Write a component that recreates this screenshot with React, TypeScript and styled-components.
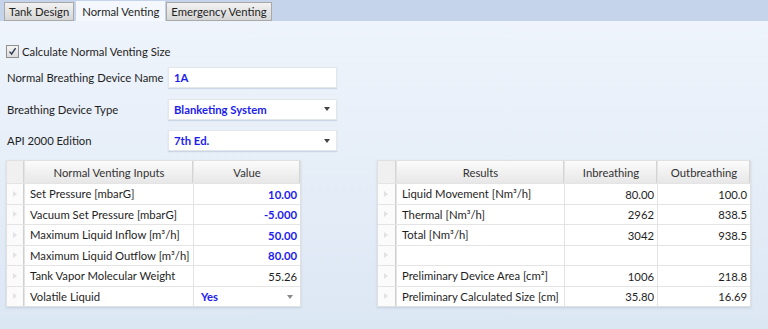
import React from 'react';
import styled, { createGlobalStyle } from 'styled-components';

const GlobalStyle = createGlobalStyle`
  html, body {
    margin: 0;
    padding: 0;
  }
  body {
    font-family: Lato, 'Liberation Sans', Arial, sans-serif;
    font-size: 11.3px;
    color: #1e1e1e;
  }
`;

const Window = styled.div`
  width: 768px;
  height: 329px;
  display: flex;
  flex-direction: column;
  overflow: hidden;
  background: linear-gradient(180deg, #f0f5fc 0%, #e6eef8 50%, #dce7f4 100%);
`;

const TabStrip = styled.div`
  display: flex;
  align-items: flex-end;
  height: 21px;
  padding-left: 4px;
  background: #c5d4ea;
  box-sizing: border-box;
`;

const Tab = styled.div<{ active?: boolean }>`
  height: ${p => (p.active ? '21px' : '19px')};
  padding: 0 ${p => (p.active ? '6px' : '4px')};
  margin-right: ${p => (p.active ? '0' : '1px')};
  display: flex;
  align-items: center;
  box-sizing: border-box;
  font-size: 11.3px;
  color: #1e1e1e;
  border: 1px solid ${p => (p.active ? '#c5d4ea' : '#a9a9a9')};
  border-bottom: ${p => (p.active ? 'none' : '1px solid #a9a9a9')};
  background: ${p =>
    p.active
      ? '#f4f8fd'
      : 'linear-gradient(180deg, #f2f2f2 0%, #e4e4e4 50%, #d6d6d6 100%)'};
`;

const Content = styled.div`
  flex: 1;
  padding: 23px 0 0 6px;
  display: flex;
  flex-direction: column;
`;

const CheckRow = styled.label`
  display: flex;
  align-items: center;
  gap: 3px;
  height: 14px;
`;

const CheckBox = styled.span`
  width: 11px;
  height: 11px;
  border: 1px solid #8e8f8f;
  background: linear-gradient(180deg, #f4f4f4, #dcdcdc);
  display: flex;
  align-items: center;
  justify-content: center;
`;

const FormRows = styled.div`
  display: flex;
  flex-direction: column;
  gap: 10.5px;
  margin-top: 9px;
`;

const FormRow = styled.div`
  display: flex;
  align-items: center;
  height: 21px;
`;

const FormLabel = styled.span`
  width: 162px;
  padding-left: 1px;
  box-sizing: border-box;
  white-space: nowrap;
`;

const Field = styled.div`
  width: 169px;
  height: 21px;
  box-sizing: border-box;
  display: flex;
  align-items: center;
  justify-content: space-between;
  padding: 0 6px 0 5px;
  background: #fff;
  border: 1px solid #e3e6ea;
  box-shadow: 0 1px 1px rgba(120, 140, 170, 0.25);
  color: #1c1cee;
  font-weight: bold;
`;

const DropArrow = styled.span<{ faint?: boolean }>`
  width: 0;
  height: 0;
  border-left: 3.5px solid transparent;
  border-right: 3.5px solid transparent;
  border-top: 4px solid ${p => (p.faint ? '#8a8a8a' : '#444')};
`;

const Grids = styled.div`
  display: flex;
  align-items: flex-start;
  gap: 76px;
  margin-top: 9px;
`;

const Grid = styled.div<{ cols: string }>`
  display: grid;
  grid-template-columns: ${p => p.cols};
  grid-auto-rows: 19.5px;
  grid-template-rows: 22px;
  gap: 1px;
  background: #e4e4e4;
  border: 1px solid #e0e0e0;
  box-shadow: 0 1px 2px rgba(110, 130, 160, 0.25);
`;

const HeadCell = styled.div`
  display: flex;
  align-items: center;
  justify-content: center;
  color: #333;
  background: linear-gradient(180deg, #fbfbfb 0%, #efefef 60%, #e7e7e7 100%);
  box-shadow: inset -1px 0 0 #d4d4d4;
`;

const Corner = styled(HeadCell)`
  background-color: #f0f0f0;
  background-image: radial-gradient(#d8d8d8 0.6px, transparent 0.7px);
  background-size: 2px 2px;
`;

const RowHead = styled.div`
  background: #fbfbfb;
  box-shadow: inset -1px 0 0 #cfcfcf;
  display: flex;
  align-items: center;
  padding-left: 6px;
`;

const Tri = styled.span`
  width: 0;
  height: 0;
  border-top: 3.5px solid transparent;
  border-bottom: 3.5px solid transparent;
  border-left: 4px solid #e2e2e2;
`;

const Cell = styled.div<{ align?: 'left' | 'right'; strong?: boolean }>`
  display: flex;
  align-items: center;
  justify-content: ${p => (p.align === 'right' ? 'flex-end' : 'flex-start')};
  padding: ${p => (p.align === 'right' ? '1px 3px 0 0' : '0 0 0 5px')};
  background: #fff;
  white-space: nowrap;
  overflow: hidden;
  color: ${p => (p.strong ? '#1c1cee' : '#1e1e1e')};
  font-weight: ${p => (p.strong ? 'bold' : 'normal')};
`;

const ComboCell = styled(Cell)`
  justify-content: space-between;
  padding: 1px 7px 0 7px;
`;

type InputRow = { label: string; value: string; strong: boolean };

const inputs: InputRow[] = [
  { label: 'Set Pressure [mbarG]', value: '10.00', strong: true },
  { label: 'Vacuum Set Pressure [mbarG]', value: '-5.000', strong: true },
  { label: 'Maximum Liquid Inflow [m³/h]', value: '50.00', strong: true },
  { label: 'Maximum Liquid Outflow [m³/h]', value: '80.00', strong: true },
  { label: 'Tank Vapor Molecular Weight', value: '55.26', strong: false },
];

const results: [string, string, string][] = [
  ['Liquid Movement [Nm³/h]', '80.00', '100.0'],
  ['Thermal [Nm³/h]', '2962', '838.5'],
  ['Total [Nm³/h]', '3042', '938.5'],
  ['', '', ''],
  ['Preliminary Device Area [cm²]', '1006', '218.8'],
  ['Preliminary Calculated Size [cm]', '35.80', '16.69'],
];

const App: React.FC = () => (
  <>
    <GlobalStyle />
    <Window>
      <TabStrip>
        <Tab>Tank Design</Tab>
        <Tab active>Normal Venting</Tab>
        <Tab>Emergency Venting</Tab>
      </TabStrip>
      <Content>
        <CheckRow>
          <CheckBox>
            <svg width="9" height="9" viewBox="0 0 9 9">
              <path d="M1.5 4.6 L3.6 7 L7.6 1.2" fill="none" stroke="#2f3b52" strokeWidth="1.4" />
            </svg>
          </CheckBox>
          Calculate Normal Venting Size
        </CheckRow>
        <FormRows>
          <FormRow>
            <FormLabel>Normal Breathing Device Name</FormLabel>
            <Field>1A</Field>
          </FormRow>
          <FormRow>
            <FormLabel>Breathing Device Type</FormLabel>
            <Field>
              Blanketing System
              <DropArrow />
            </Field>
          </FormRow>
          <FormRow>
            <FormLabel>API 2000 Edition</FormLabel>
            <Field>
              7th Ed.
              <DropArrow />
            </Field>
          </FormRow>
        </FormRows>
        <Grids>
          <Grid cols="17px 168px 106px">
            <Corner />
            <HeadCell>Normal Venting Inputs</HeadCell>
            <HeadCell>Value</HeadCell>
            {inputs.map((r, i) => (
              <React.Fragment key={i}>
                <RowHead>
                  <Tri />
                </RowHead>
                <Cell>{r.label}</Cell>
                <Cell align="right" strong={r.strong}>
                  {r.value}
                </Cell>
              </React.Fragment>
            ))}
            <RowHead>
              <Tri />
            </RowHead>
            <Cell>Volatile Liquid</Cell>
            <ComboCell strong>
              Yes
              <DropArrow faint />
            </ComboCell>
          </Grid>
          <Grid cols="18px 167px 92px 92px">
            <Corner />
            <HeadCell>Results</HeadCell>
            <HeadCell>Inbreathing</HeadCell>
            <HeadCell>Outbreathing</HeadCell>
            {results.map((r, i) => (
              <React.Fragment key={i}>
                <RowHead>
                  <Tri />
                </RowHead>
                <Cell>{r[0]}</Cell>
                <Cell align="right">{r[1]}</Cell>
                <Cell align="right">{r[2]}</Cell>
              </React.Fragment>
            ))}
          </Grid>
        </Grids>
      </Content>
    </Window>
  </>
);

export default App;
